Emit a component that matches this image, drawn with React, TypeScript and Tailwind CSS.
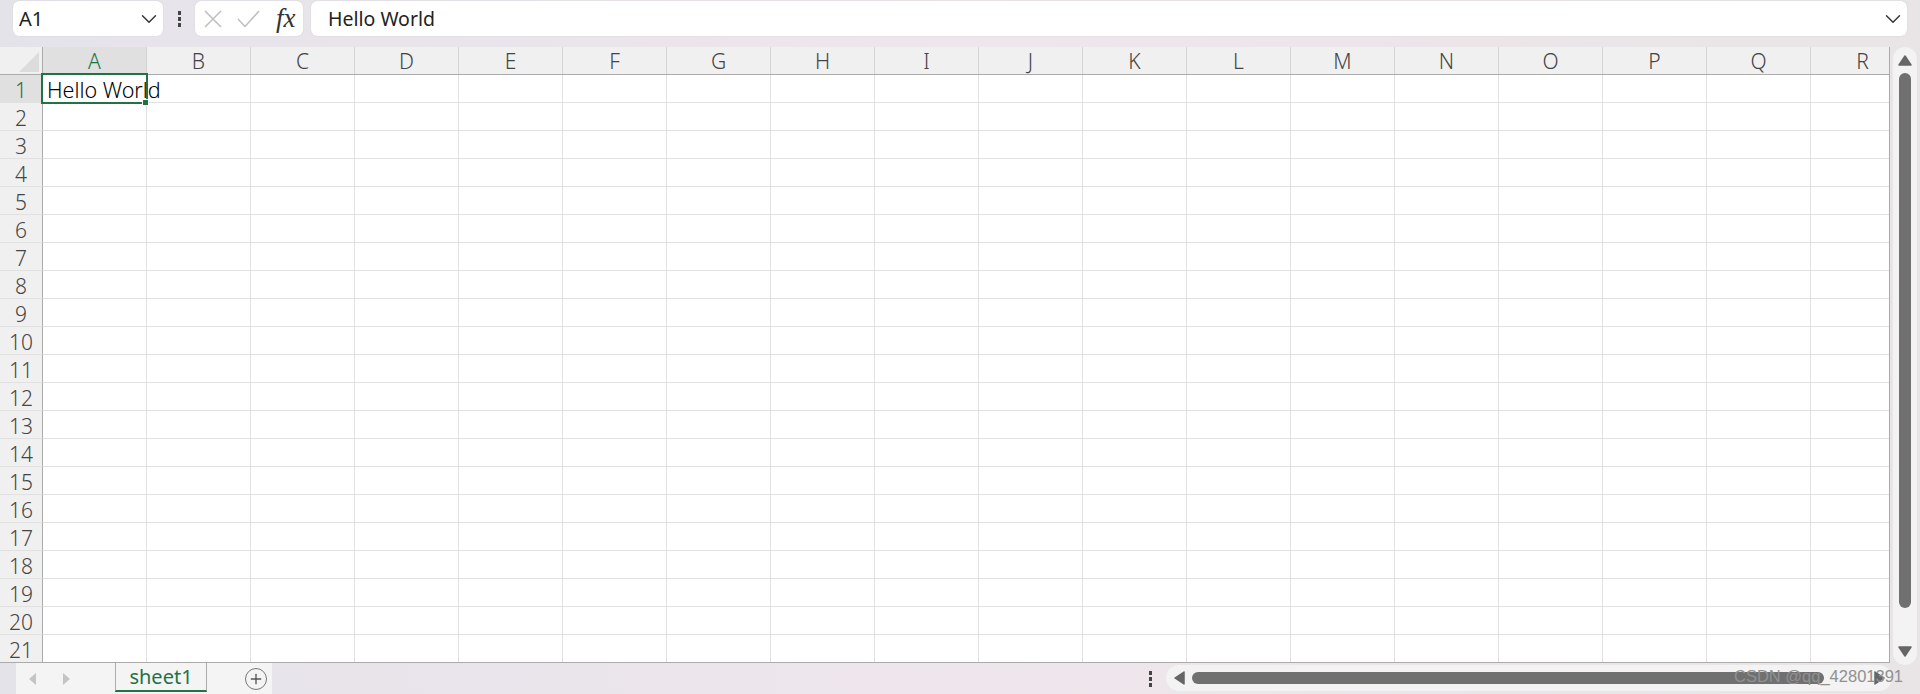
import { ChevronDown, Plus } from 'lucide-react';

const columns = 'ABCDEFGHIJKLMNOPQR'.split('');
const rows = Array.from({ length: 21 }, (_, i) => i + 1);

function Dots() {
  return (
    <div className="flex flex-col items-center gap-[2px]">
      <span className="h-[4px] w-[3px] bg-[#444]"></span>
      <span className="h-[4px] w-[3px] bg-[#444]"></span>
      <span className="h-[4px] w-[3px] bg-[#444]"></span>
    </div>
  );
}

function Triangle({ dir, color = '#666' }: { dir: 'up' | 'down' | 'left' | 'right'; color?: string }) {
  const points = {
    up: '7,1 13,10 1,10',
    down: '1,1 13,1 7,10',
    left: '11,1 11,13 2,7',
    right: '1,1 1,13 10,7',
  }[dir];
  const size = dir === 'up' || dir === 'down' ? { w: 14, h: 11 } : { w: 12, h: 14 };
  return (
    <svg width={size.w} height={size.h} viewBox={`0 0 ${size.w} ${size.h}`}>
      <polygon points={points} fill={color} strokeLinejoin="round" stroke={color} strokeWidth="1.5" />
    </svg>
  );
}

function FormulaBar() {
  return (
    <div className="flex h-[47px] items-start gap-2 pt-px pl-[13px] pr-[13px]">
      <div className="flex h-[35px] w-[150px] items-center justify-between rounded-[6px] bg-white pl-[6px] pr-px shadow-[0_0_1px_#bbb]">
        <span className="text-[20px] text-[#222]">A1</span>
        <ChevronDown size={26} strokeWidth={1.3} className="text-[#333]" />
      </div>
      <div className="flex h-[35px] w-[16px] items-center justify-center">
        <Dots />
      </div>
      <div className="flex h-[35px] w-[108px] items-center rounded-[6px] bg-white pl-[9px] shadow-[0_0_1px_#bbb]">
        <svg width="18" height="18" viewBox="0 0 18 18" fill="none" stroke="#bdbdbd" strokeWidth="1.5">
          <path d="M1 1 L17 17 M17 1 L1 17" />
        </svg>
        <svg className="ml-[15px]" width="23" height="18" viewBox="0 0 23 18" fill="none" stroke="#bdbdbd" strokeWidth="1.5">
          <path d="M1 9 L8 16.5 L22 1" />
        </svg>
        <span className="ml-[16px] text-[27px] italic leading-none text-[#333] [font-family:'Liberation_Serif',serif]">fx</span>
      </div>
      <div className="flex h-[35px] flex-1 items-center justify-between rounded-[6px] bg-white pl-[17px] pr-px shadow-[0_0_1px_#bbb]">
        <span className="text-[19.5px] text-[#222]">Hello World</span>
        <ChevronDown size={26} strokeWidth={1.3} className="text-[#333]" />
      </div>
    </div>
  );
}

function Grid() {
  return (
    <div className="relative h-[616px] w-[1890px] overflow-hidden border-r border-b border-[#ababab] bg-white">
      <div className="flex h-[28px] border-b border-[#ababab] bg-[#f0f0f0]">
        <div className="relative h-full w-[43px] shrink-0 border-r border-[#ababab]">
          <svg className="absolute left-[19px] top-[5px]" width="20" height="20" viewBox="0 0 20 20">
            <polygon points="20,0 20,20 0,20" fill="#dcdcdc" />
          </svg>
        </div>
        {columns.map((c) => (
          <div
            key={c}
            className={`flex w-[104px] shrink-0 items-center justify-center border-r border-[#d4d4d4] pt-[2px] text-[21px] font-light ${
              c === 'A' ? 'bg-[#e0e0e0] text-[#217346]' : 'text-[#444]'
            }`}
          >
            {c}
          </div>
        ))}
      </div>
      {rows.map((r) => (
        <div key={r} className="flex h-[28px]">
          <div
            className={`flex w-[43px] shrink-0 items-center justify-center border-r border-b border-r-[#ababab] border-b-[#e1e1e1] pt-[4px] text-[21px] font-light leading-none ${
              r === 1 ? 'bg-[#e0e0e0] text-[#217346]' : 'bg-[#f0f0f0] text-[#444]'
            }`}
          >
            {r}
          </div>
          {columns.map((c) => (
            <div key={c} className="relative w-[104px] shrink-0 border-r border-b border-[#e1e1e1]">
              {r === 1 && c === 'A' && (
                <span className="absolute left-[4px] top-[1px] z-10 whitespace-nowrap text-[21.5px] font-light leading-[28px] text-black">
                  Hello World
                </span>
              )}
            </div>
          ))}
        </div>
      ))}
      <div className="pointer-events-none absolute left-[41px] top-[26px] z-20 h-[31px] w-[107px] border-2 border-[#217346]"></div>
      <div className="absolute left-[142px] top-[52px] z-20 h-[7px] w-[7px] border border-white bg-[#217346]"></div>
    </div>
  );
}

function VerticalScroll() {
  return (
    <div className="mb-[-2px] ml-[3px] flex h-[618px] w-[24px] flex-col items-center rounded-[12px] bg-[#f3f3f3]">
      <div className="mt-[8px]">
        <Triangle dir="up" />
      </div>
      <div className="mt-[7px] h-[535px] w-[12px] shrink-0 rounded-[6px] bg-[#707070]"></div>
      <div className="mt-[38px]">
        <Triangle dir="down" />
      </div>
    </div>
  );
}

function TabBar() {
  return (
    <div className="flex h-[31px] items-start pl-[16px]">
      <div className="flex h-[31px] w-[256px] items-start bg-[#f4f4f4]">
        <div className="flex w-[99px] items-center gap-[26px] pl-[13px] pt-[10px]">
          <svg width="8" height="12" viewBox="0 0 8 12"><polygon points="7,0 7,12 0,6" fill="#c4c4c4" /></svg>
          <svg width="8" height="12" viewBox="0 0 8 12"><polygon points="0,0 0,12 7,6" fill="#c4c4c4" /></svg>
        </div>
        <div className="flex h-[29px] w-[92px] items-center justify-center border-x border-b-2 border-x-[#ababab] border-b-[#217346] bg-[#f4f4f4] text-[20px] text-[#217346]">
          sheet1
        </div>
        <div className="ml-[38px] mt-[5px] flex h-[22px] w-[22px] items-center justify-center rounded-full border-[1.5px] border-[#777]">
          <Plus size={16} strokeWidth={2} className="text-[#555]" />
        </div>
      </div>
      <div className="flex-1"></div>
      <div className="mr-[14px] flex h-[32px] items-center">
        <Dots />
      </div>
      <div className="mt-[2px] mr-[28px] flex h-[26px] w-[726px] items-center rounded-[13px] bg-[#f3f3f3] pl-[7px] pr-[6px]">
        <Triangle dir="left" />
        <div className="ml-[7px] h-[12px] w-[632px] rounded-[6px] bg-[#707070]"></div>
        <div className="ml-auto">
          <Triangle dir="right" />
        </div>
      </div>
    </div>
  );
}

export default function App() {
  return (
    <div className="relative h-[694px] w-[1920px] overflow-hidden bg-gradient-to-r from-[#e5e3ea] via-[#eee6ec] to-[#e9e5e6] font-['Noto_Sans',sans-serif]">
      <FormulaBar />
      <div className="flex">
        <Grid />
        <VerticalScroll />
      </div>
      <TabBar />
      <span className="absolute left-[1734px] top-[664px] text-[16.5px] text-[#909090] [font-family:'Liberation_Sans',sans-serif]">
        CSDN @qq_42801391
      </span>
    </div>
  );
}
